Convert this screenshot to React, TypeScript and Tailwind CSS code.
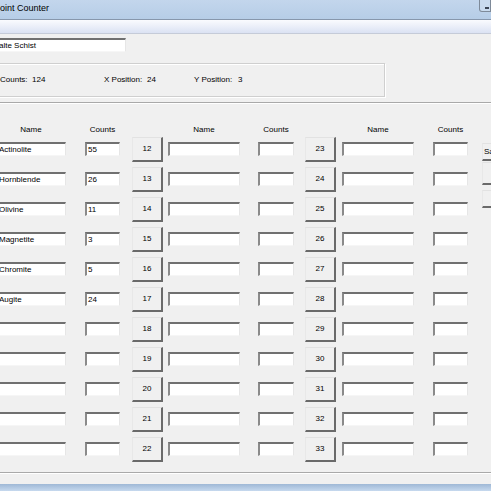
import React from "react";

// rows of the point counter grid
const minerals = [
  { name: "Actinolite", count: "55" },
  { name: "Hornblende", count: "26" },
  { name: "Olivine", count: "11" },
  { name: "Magnetite", count: "3" },
  { name: "Chromite", count: "5" },
  { name: "Augite", count: "24" },
  { name: "", count: "" },
  { name: "", count: "" },
  { name: "", count: "" },
  { name: "", count: "" },
  { name: "", count: "" },
];

const fieldCls =
  "h-[14px] bg-white border-t-2 border-l-2 border-r border-b border-t-[#707070] border-l-[#8a8a8a] border-r-[#e6e6e6] border-b-[#f6f6f6] text-[8px] leading-[11px] pl-[1px] overflow-hidden whitespace-nowrap text-black";

const btnCls =
  "flex items-center justify-center bg-[#f0f0f0] border-t border-l border-t-[#e2e2e2] border-l-[#e8e8e8] border-r-2 border-b-2 border-r-[#6a6a6a] border-b-[#6a6a6a] text-[8px] text-black";

const App: React.FC = () => {
  return (
    <div
      className="w-[491px] h-[491px] overflow-hidden bg-[#f0f0f0] flex flex-col"
      style={{ fontFamily: '"Liberation Sans", Arial, sans-serif' }}
    >
      {/* Title bar */}
      <div className="h-[20px] shrink-0 flex items-start justify-between bg-gradient-to-b from-[#c3d6ec] to-[#b6cde7] border-b border-b-[#8797ac]">
        <span className="text-[9px] leading-[16px] text-black">oint Counter</span>
        <div className="w-[12px] h-[12px] mt-[0px] border border-[#7e8a99] border-t-0 rounded-bl-[3px] bg-[#c9dbee] flex items-end justify-end pr-[1px] pb-[2px]">
          <div className="w-[4px] h-[2px] bg-[#3b4655]" />
        </div>
      </div>

      {/* Menu strip */}
      <div className="h-[14px] shrink-0 bg-gradient-to-b from-[#fafbfe] to-[#dbe2f3] border-b border-b-[#c5cbd8]" />

      {/* Sample name */}
      <div className="mt-[4px] -ml-[4px]">
        <div className={`${fieldCls} w-[130px]`}>alte Schist</div>
      </div>

      {/* Summary group */}
      <div className="mt-[11px] -ml-[4px] w-[389px] h-[34px] shrink-0 border border-[#cfcfcf] shadow-[inset_1px_1px_0_#ffffff,1px_1px_0_#ffffff] flex items-center text-[8px] text-black">
        <span className="ml-[3px] w-[32px]">Counts:</span>
        <span className="w-[72px]">124</span>
        <span className="w-[43px]">X Position:</span>
        <span className="w-[47px]">24</span>
        <span className="w-[44px]">Y Position:</span>
        <span>3</span>
      </div>

      {/* Separator */}
      <div className="mt-[5px] h-[1px] shrink-0 bg-[#a9a9a9]" />
      <div className="h-[1px] shrink-0 bg-white" />

      {/* Grid */}
      <div className="flex">
        <div className="flex flex-col">
          <div className="h-[30px] flex items-end text-[8px] leading-[8px] text-black">
            <div className="-ml-[4px] w-[70px] text-center">Name</div>
            <div className="ml-[19px] w-[35px] text-center">Counts</div>
            <div className="ml-[12px] w-[31px]" />
            <div className="ml-[5px] w-[72px] text-center">Name</div>
            <div className="ml-[18px] w-[36px] text-center">Counts</div>
            <div className="ml-[11px] w-[31px]" />
            <div className="ml-[6px] w-[72px] text-center">Name</div>
            <div className="ml-[19px] w-[35px] text-center">Counts</div>
          </div>
          {minerals.map((m, i) => (
            <div key={i} className="h-[30px] flex items-center">
              <div className={`${fieldCls} -ml-[4px] w-[70px]`}>{m.name}</div>
              <div className={`${fieldCls} ml-[19px] w-[35px]`}>{m.count}</div>
              <div className={`${btnCls} ml-[12px] w-[31px] h-[25px]`}>{12 + i}</div>
              <div className={`${fieldCls} ml-[5px] w-[72px]`} />
              <div className={`${fieldCls} ml-[18px] w-[36px]`} />
              <div className={`${btnCls} ml-[11px] w-[31px] h-[25px]`}>{23 + i}</div>
              <div className={`${fieldCls} ml-[6px] w-[72px]`} />
              <div className={`${fieldCls} ml-[19px] w-[35px]`} />
            </div>
          ))}
        </div>

        {/* Side buttons */}
        <div className="ml-[14px] pt-[39px] flex flex-col shrink-0">
          <div className={`${btnCls} w-[50px] h-[18px] !justify-start pl-[1px]`}>Save</div>
          <div className={`${btnCls} mt-[1px] w-[50px] h-[23px]`} />
          <div className={`${btnCls} mt-[5px] w-[50px] h-[18px]`} />
        </div>
      </div>

      {/* Bottom separator */}
      <div className="mt-[8px] h-[1px] shrink-0 bg-[#a9a9a9]" />
      <div className="h-[1px] shrink-0 bg-white" />
      <div className="h-[10px] shrink-0" />
      <div className="flex-1 bg-gradient-to-b from-[#9fb8d6] to-[#c6d9ee]" />
    </div>
  );
};

export default App;
